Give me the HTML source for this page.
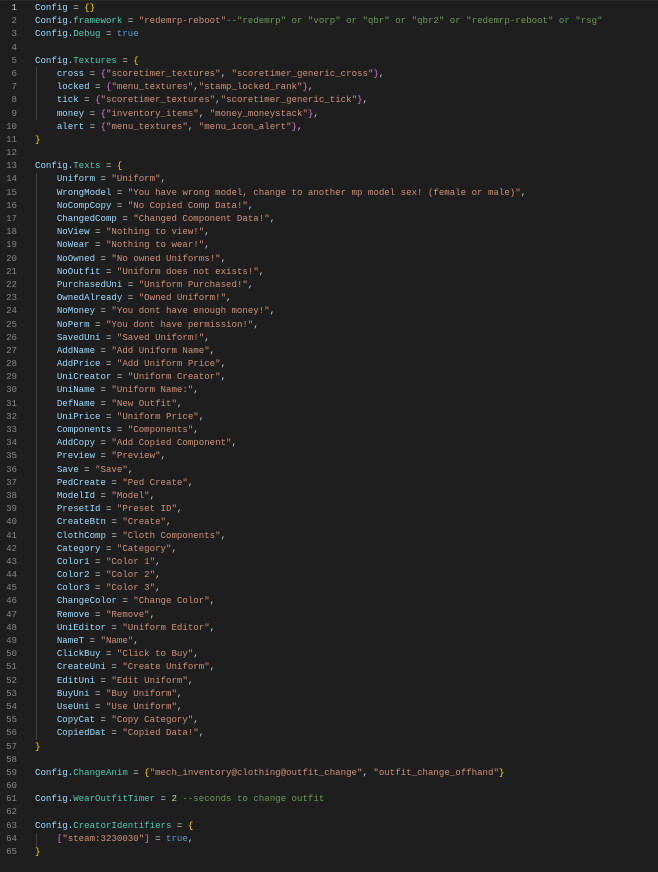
<!DOCTYPE html>
<html><head><meta charset="utf-8"><style>
html,body{margin:0;padding:0;background:#1e1e1e;width:658px;height:872px;overflow:hidden}
.top{position:absolute;left:0;top:0;width:658px;height:1px;background:#2a2a2a}
.code{position:absolute;left:0;top:1px;width:658px;font-family:"Liberation Mono",monospace;font-size:9.1px;line-height:13.19px;color:#d4d4d4;white-space:normal}
.l{height:13.19px;position:relative}
.n{position:absolute;left:0;width:17px;text-align:right;color:#858585}
.n.a{color:#c6c6c6}
.t{position:absolute;left:35px;white-space:pre}
.v{color:#9cdcfe}.f{color:#4ec9b0}.s{color:#ce9178}.c{color:#6a9955}.k{color:#569cd6}.y{color:#ffd700}.m{color:#da70d6}.num{color:#b5cea8}
.g{position:absolute;left:36px;width:1px;background:#404040}
</style></head><body>
<div class="top"></div>
<div class="g" style="top:67px;height:53px"></div>
<div class="g" style="top:173px;height:567px"></div>
<div class="g" style="top:833px;height:14px"></div>
<div class="code"><div class="l"><span class="n a">1</span><span class="t"><span class="v">Config</span> = <span class="y">{}</span></span></div><div class="l"><span class="n">2</span><span class="t"><span class="v">Config</span>.<span class="f">framework</span> = <span class="s">"redemrp-reboot"</span><span class="c">--"redemrp" or "vorp" or "qbr" or "qbr2" or "redemrp-reboot" or "rsg"</span></span></div><div class="l"><span class="n">3</span><span class="t"><span class="v">Config</span>.<span class="f">Debug</span> = <span class="k">true</span></span></div><div class="l"><span class="n">4</span></div><div class="l"><span class="n">5</span><span class="t"><span class="v">Config</span>.<span class="f">Textures</span> = <span class="y">{</span></span></div><div class="l"><span class="n">6</span><span class="t">    <span class="v">cross</span> = <span class="m">{</span><span class="s">"scoretimer_textures"</span>, <span class="s">"scoretimer_generic_cross"</span><span class="m">}</span>,</span></div><div class="l"><span class="n">7</span><span class="t">    <span class="v">locked</span> = <span class="m">{</span><span class="s">"menu_textures"</span>,<span class="s">"stamp_locked_rank"</span><span class="m">}</span>,</span></div><div class="l"><span class="n">8</span><span class="t">    <span class="v">tick</span> = <span class="m">{</span><span class="s">"scoretimer_textures"</span>,<span class="s">"scoretimer_generic_tick"</span><span class="m">}</span>,</span></div><div class="l"><span class="n">9</span><span class="t">    <span class="v">money</span> = <span class="m">{</span><span class="s">"inventory_items"</span>, <span class="s">"money_moneystack"</span><span class="m">}</span>,</span></div><div class="l"><span class="n">10</span><span class="t">    <span class="v">alert</span> = <span class="m">{</span><span class="s">"menu_textures"</span>, <span class="s">"menu_icon_alert"</span><span class="m">}</span>,</span></div><div class="l"><span class="n">11</span><span class="t"><span class="y">}</span></span></div><div class="l"><span class="n">12</span></div><div class="l"><span class="n">13</span><span class="t"><span class="v">Config</span>.<span class="f">Texts</span> = <span class="y">{</span></span></div><div class="l"><span class="n">14</span><span class="t">    <span class="v">Uniform</span> = <span class="s">"Uniform"</span>,</span></div><div class="l"><span class="n">15</span><span class="t">    <span class="v">WrongModel</span> = <span class="s">"You have wrong model, change to another mp model sex! (female or male)"</span>,</span></div><div class="l"><span class="n">16</span><span class="t">    <span class="v">NoCompCopy</span> = <span class="s">"No Copied Comp Data!"</span>,</span></div><div class="l"><span class="n">17</span><span class="t">    <span class="v">ChangedComp</span> = <span class="s">"Changed Component Data!"</span>,</span></div><div class="l"><span class="n">18</span><span class="t">    <span class="v">NoView</span> = <span class="s">"Nothing to view!"</span>,</span></div><div class="l"><span class="n">19</span><span class="t">    <span class="v">NoWear</span> = <span class="s">"Nothing to wear!"</span>,</span></div><div class="l"><span class="n">20</span><span class="t">    <span class="v">NoOwned</span> = <span class="s">"No owned Uniforms!"</span>,</span></div><div class="l"><span class="n">21</span><span class="t">    <span class="v">NoOutfit</span> = <span class="s">"Uniform does not exists!"</span>,</span></div><div class="l"><span class="n">22</span><span class="t">    <span class="v">PurchasedUni</span> = <span class="s">"Uniform Purchased!"</span>,</span></div><div class="l"><span class="n">23</span><span class="t">    <span class="v">OwnedAlready</span> = <span class="s">"Owned Uniform!"</span>,</span></div><div class="l"><span class="n">24</span><span class="t">    <span class="v">NoMoney</span> = <span class="s">"You dont have enough money!"</span>,</span></div><div class="l"><span class="n">25</span><span class="t">    <span class="v">NoPerm</span> = <span class="s">"You dont have permission!"</span>,</span></div><div class="l"><span class="n">26</span><span class="t">    <span class="v">SavedUni</span> = <span class="s">"Saved Uniform!"</span>,</span></div><div class="l"><span class="n">27</span><span class="t">    <span class="v">AddName</span> = <span class="s">"Add Uniform Name"</span>,</span></div><div class="l"><span class="n">28</span><span class="t">    <span class="v">AddPrice</span> = <span class="s">"Add Uniform Price"</span>,</span></div><div class="l"><span class="n">29</span><span class="t">    <span class="v">UniCreator</span> = <span class="s">"Uniform Creator"</span>,</span></div><div class="l"><span class="n">30</span><span class="t">    <span class="v">UniName</span> = <span class="s">"Uniform Name:"</span>,</span></div><div class="l"><span class="n">31</span><span class="t">    <span class="v">DefName</span> = <span class="s">"New Outfit"</span>,</span></div><div class="l"><span class="n">32</span><span class="t">    <span class="v">UniPrice</span> = <span class="s">"Uniform Price"</span>,</span></div><div class="l"><span class="n">33</span><span class="t">    <span class="v">Components</span> = <span class="s">"Components"</span>,</span></div><div class="l"><span class="n">34</span><span class="t">    <span class="v">AddCopy</span> = <span class="s">"Add Copied Component"</span>,</span></div><div class="l"><span class="n">35</span><span class="t">    <span class="v">Preview</span> = <span class="s">"Preview"</span>,</span></div><div class="l"><span class="n">36</span><span class="t">    <span class="v">Save</span> = <span class="s">"Save"</span>,</span></div><div class="l"><span class="n">37</span><span class="t">    <span class="v">PedCreate</span> = <span class="s">"Ped Create"</span>,</span></div><div class="l"><span class="n">38</span><span class="t">    <span class="v">ModelId</span> = <span class="s">"Model"</span>,</span></div><div class="l"><span class="n">39</span><span class="t">    <span class="v">PresetId</span> = <span class="s">"Preset ID"</span>,</span></div><div class="l"><span class="n">40</span><span class="t">    <span class="v">CreateBtn</span> = <span class="s">"Create"</span>,</span></div><div class="l"><span class="n">41</span><span class="t">    <span class="v">ClothComp</span> = <span class="s">"Cloth Components"</span>,</span></div><div class="l"><span class="n">42</span><span class="t">    <span class="v">Category</span> = <span class="s">"Category"</span>,</span></div><div class="l"><span class="n">43</span><span class="t">    <span class="v">Color1</span> = <span class="s">"Color 1"</span>,</span></div><div class="l"><span class="n">44</span><span class="t">    <span class="v">Color2</span> = <span class="s">"Color 2"</span>,</span></div><div class="l"><span class="n">45</span><span class="t">    <span class="v">Color3</span> = <span class="s">"Color 3"</span>,</span></div><div class="l"><span class="n">46</span><span class="t">    <span class="v">ChangeColor</span> = <span class="s">"Change Color"</span>,</span></div><div class="l"><span class="n">47</span><span class="t">    <span class="v">Remove</span> = <span class="s">"Remove"</span>,</span></div><div class="l"><span class="n">48</span><span class="t">    <span class="v">UniEditor</span> = <span class="s">"Uniform Editor"</span>,</span></div><div class="l"><span class="n">49</span><span class="t">    <span class="v">NameT</span> = <span class="s">"Name"</span>,</span></div><div class="l"><span class="n">50</span><span class="t">    <span class="v">ClickBuy</span> = <span class="s">"Click to Buy"</span>,</span></div><div class="l"><span class="n">51</span><span class="t">    <span class="v">CreateUni</span> = <span class="s">"Create Uniform"</span>,</span></div><div class="l"><span class="n">52</span><span class="t">    <span class="v">EditUni</span> = <span class="s">"Edit Uniform"</span>,</span></div><div class="l"><span class="n">53</span><span class="t">    <span class="v">BuyUni</span> = <span class="s">"Buy Uniform"</span>,</span></div><div class="l"><span class="n">54</span><span class="t">    <span class="v">UseUni</span> = <span class="s">"Use Uniform"</span>,</span></div><div class="l"><span class="n">55</span><span class="t">    <span class="v">CopyCat</span> = <span class="s">"Copy Category"</span>,</span></div><div class="l"><span class="n">56</span><span class="t">    <span class="v">CopiedDat</span> = <span class="s">"Copied Data!"</span>,</span></div><div class="l"><span class="n">57</span><span class="t"><span class="y">}</span></span></div><div class="l"><span class="n">58</span></div><div class="l"><span class="n">59</span><span class="t"><span class="v">Config</span>.<span class="f">ChangeAnim</span> = <span class="y">{</span><span class="s">"mech_inventory@clothing@outfit_change"</span>, <span class="s">"outfit_change_offhand"</span><span class="y">}</span></span></div><div class="l"><span class="n">60</span></div><div class="l"><span class="n">61</span><span class="t"><span class="v">Config</span>.<span class="f">WearOutfitTimer</span> = <span class="num">2</span> <span class="c">--seconds to change outfit</span></span></div><div class="l"><span class="n">62</span></div><div class="l"><span class="n">63</span><span class="t"><span class="v">Config</span>.<span class="f">CreatorIdentifiers</span> = <span class="y">{</span></span></div><div class="l"><span class="n">64</span><span class="t">    <span class="m">[</span><span class="s">"steam:3230030"</span><span class="m">]</span> = <span class="k">true</span>,</span></div><div class="l"><span class="n">65</span><span class="t"><span class="y">}</span></span></div></div>
</body></html>
